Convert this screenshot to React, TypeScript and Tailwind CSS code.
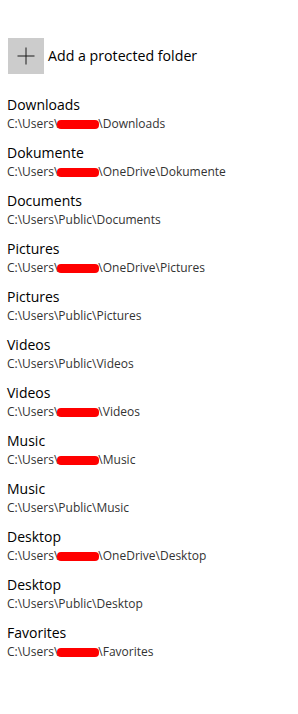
const folders: { name: string; path: string[] }[] = [
  { name: "Downloads", path: ["C:\\Users\\", "*", "\\Downloads"] },
  { name: "Dokumente", path: ["C:\\Users\\", "*", "\\OneDrive\\Dokumente"] },
  { name: "Documents", path: ["C:\\Users\\Public\\Documents"] },
  { name: "Pictures", path: ["C:\\Users\\", "*", "\\OneDrive\\Pictures"] },
  { name: "Pictures", path: ["C:\\Users\\Public\\Pictures"] },
  { name: "Videos", path: ["C:\\Users\\Public\\Videos"] },
  { name: "Videos", path: ["C:\\Users\\", "*", "\\Videos"] },
  { name: "Music", path: ["C:\\Users\\", "*", "\\Music"] },
  { name: "Music", path: ["C:\\Users\\Public\\Music"] },
  { name: "Desktop", path: ["C:\\Users\\", "*", "\\OneDrive\\Desktop"] },
  { name: "Desktop", path: ["C:\\Users\\Public\\Desktop"] },
  { name: "Favorites", path: ["C:\\Users\\", "*", "\\Favorites"] },
];

export default function App() {
  return (
    <div className="w-[298px] h-[714px] bg-white font-['Open_Sans',sans-serif] text-black">
      <div className="pt-[38px] px-2">
        <button className="flex items-center gap-[4px]">
          <span className="w-9 h-9 bg-[#cccccc] flex items-center justify-center">
            <svg width="18" height="18" viewBox="0 0 18 18">
              <path d="M9 0.5V17.5M0.5 9H17.5" stroke="#1a1a1a" strokeWidth="1" />
            </svg>
          </span>
          <span className="text-[14.2px] leading-5">Add a protected folder</span>
        </button>
      </div>

      <ul className="mt-[21px] px-[7px]">
        {folders.map((folder, index) => (
          <li key={index} className="h-12">
            <div className="text-[14px] leading-5">{folder.name}</div>
            <div className="mt-[1px] text-[12px] leading-4 text-[#333333] whitespace-nowrap">
              {folder.path.map((part, i) =>
                part === "*" ? (
                  // redacted user name
                  <span
                    key={i}
                    className="inline-block align-middle w-[42px] h-[9px] bg-[#ff0000] rounded-[4px] -mx-[1px]"
                  />
                ) : (
                  <span key={i}>{part}</span>
                ),
              )}
            </div>
          </li>
        ))}
      </ul>
    </div>
  );
}
